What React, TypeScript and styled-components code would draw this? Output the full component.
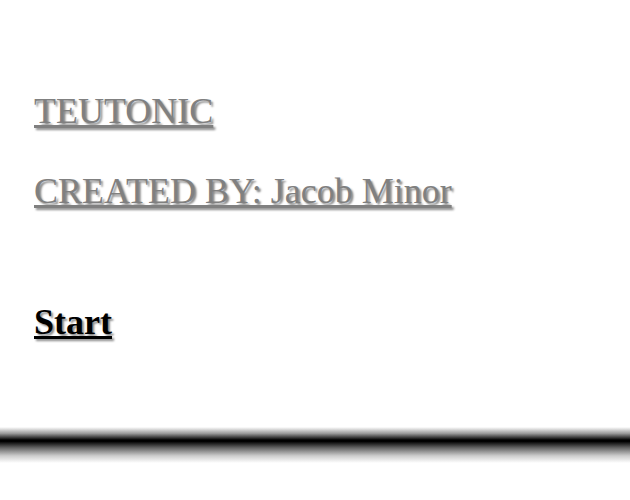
import React from 'react';
import styled, {createGlobalStyle} from 'styled-components';

const Global = createGlobalStyle`
  html, body {
    margin: 0;
    background: #fff;
  }
  body {
    font-family: "Liberation Serif", "Times New Roman", serif;
  }
`

const Page = styled.div`
  display: flex;
  flex-direction: column;
  padding: 91px 0 0 34px;
`

const Line = styled.div<{ gap: number }>`
  font-size: 36px;
  line-height: 40px;
  margin-top: ${p => p.gap}px;
`

const TitleLink = styled.a<{ strong?: boolean }>`
  color: ${p => p.strong ? '#000' : '#808080'};
  font-weight: ${p => p.strong ? 700 : 400};
  text-decoration: underline;
  text-shadow: 2px 2px 2px #8a8a8a;
  cursor: pointer;
`

// soft black band across the page, fading out above and below
const Bar = styled.div`
  height: 36px;
  margin-top: 85px;
  background: linear-gradient(to bottom, #fff 0%, #999 18%, #000 36%, #000 40%, #666 58%, #ccc 80%, #fff 100%);
`

export default function App() {
  return (
    <>
      <Global />
      <Page>
        <Line gap={0}><TitleLink>TEUTONIC</TitleLink></Line>
        <Line gap={40}><TitleLink>CREATED BY: Jacob Minor</TitleLink></Line>
        <Line gap={91}><TitleLink strong>Start</TitleLink></Line>
      </Page>
      <Bar />
    </>
  );
}
